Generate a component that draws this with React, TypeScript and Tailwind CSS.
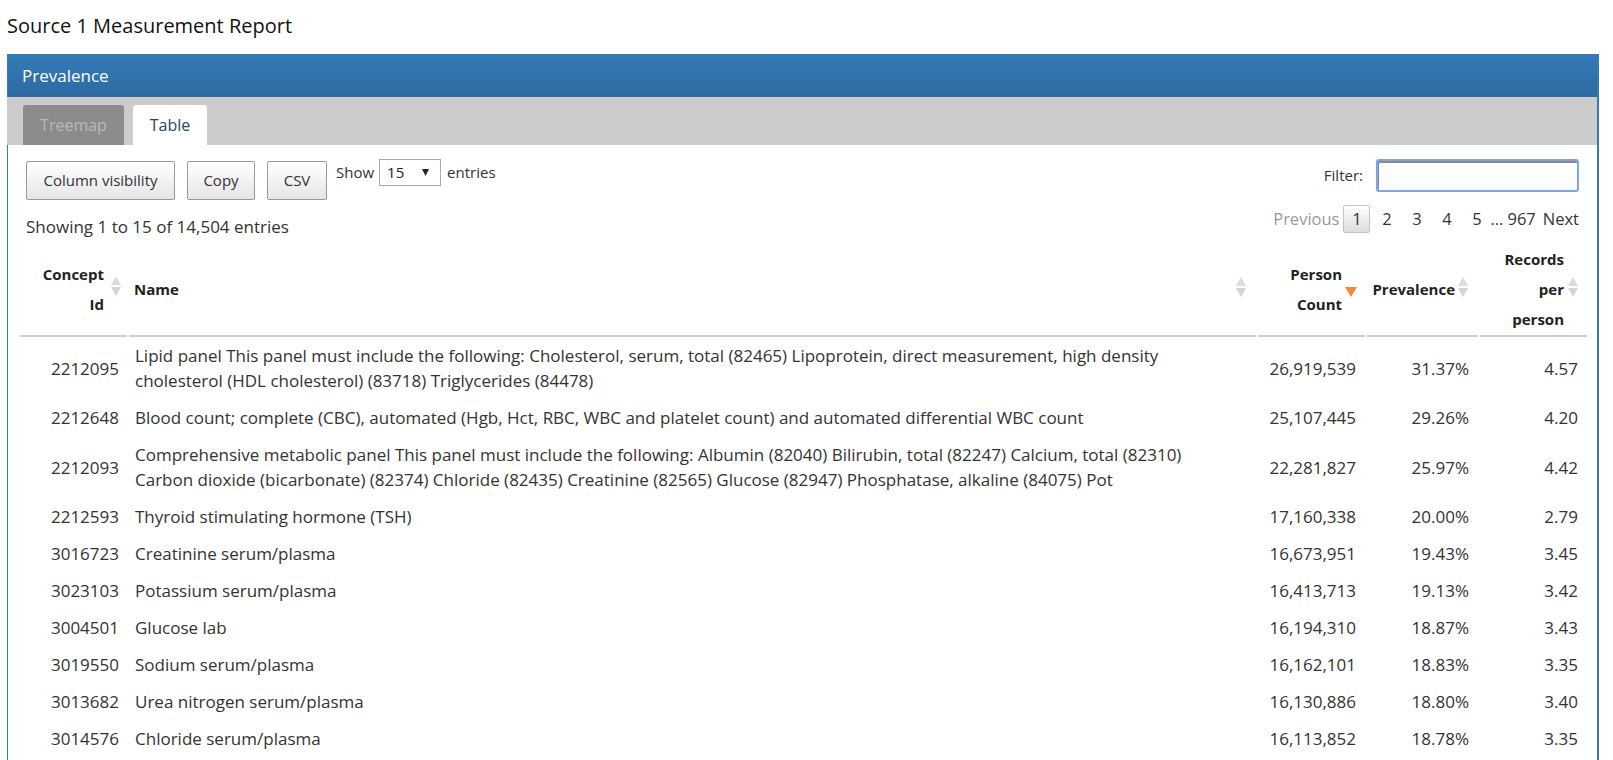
import React from 'react';

type Row = { id: string; name: string[]; count: string; prev: string; rpp: string };

const rows: Row[] = [
  {
    id: '2212095',
    name: [
      'Lipid panel This panel must include the following: Cholesterol, serum, total (82465) Lipoprotein, direct measurement, high density',
      'cholesterol (HDL cholesterol) (83718) Triglycerides (84478)',
    ],
    count: '26,919,539',
    prev: '31.37%',
    rpp: '4.57',
  },
  {
    id: '2212648',
    name: ['Blood count; complete (CBC), automated (Hgb, Hct, RBC, WBC and platelet count) and automated differential WBC count'],
    count: '25,107,445',
    prev: '29.26%',
    rpp: '4.20',
  },
  {
    id: '2212093',
    name: [
      'Comprehensive metabolic panel This panel must include the following: Albumin (82040) Bilirubin, total (82247) Calcium, total (82310)',
      'Carbon dioxide (bicarbonate) (82374) Chloride (82435) Creatinine (82565) Glucose (82947) Phosphatase, alkaline (84075) Pot',
    ],
    count: '22,281,827',
    prev: '25.97%',
    rpp: '4.42',
  },
  { id: '2212593', name: ['Thyroid stimulating hormone (TSH)'], count: '17,160,338', prev: '20.00%', rpp: '2.79' },
  { id: '3016723', name: ['Creatinine serum/plasma'], count: '16,673,951', prev: '19.43%', rpp: '3.45' },
  { id: '3023103', name: ['Potassium serum/plasma'], count: '16,413,713', prev: '19.13%', rpp: '3.42' },
  { id: '3004501', name: ['Glucose lab'], count: '16,194,310', prev: '18.87%', rpp: '3.43' },
  { id: '3019550', name: ['Sodium serum/plasma'], count: '16,162,101', prev: '18.83%', rpp: '3.35' },
  { id: '3013682', name: ['Urea nitrogen serum/plasma'], count: '16,130,886', prev: '18.80%', rpp: '3.40' },
  { id: '3014576', name: ['Chloride serum/plasma'], count: '16,113,852', prev: '18.78%', rpp: '3.35' },
];

const SortBoth = () => (
  <svg width="12" height="22" viewBox="0 0 12 22">
    <polygon points="6,1 11,10 1,10" fill="#dcdcdc" />
    <polygon points="1,12 11,12 6,21" fill="#d4d4d4" />
  </svg>
);

const SortDesc = () => (
  <svg width="12" height="10" viewBox="0 0 12 10">
    <polygon points="0,0 12,0 6,10" fill="#f28a3a" />
  </svg>
);

const App = () => {
  return (
    <div className="h-[760px] overflow-hidden bg-white font-['Open_Sans',sans-serif] text-[#333]">
      <h4 className="ml-[7px] pt-[12px] text-[20px] leading-[27px] font-normal text-[#111]">Source 1 Measurement Report</h4>

      <div className="mt-[15px] ml-[7px] mr-[14px] border-t border-l border-r-2 border-[#337ab7]">
        <div className="h-[42px] flex items-center pl-[14px] text-[17px] text-white bg-linear-to-b from-[#347bb9] to-[#2c6aa2]">
          Prevalence
        </div>

        <div className="-ml-px h-[48px] bg-[#cccccc] flex items-end pl-[16px] gap-[9px] text-[16px]">
          <div className="w-[101px] h-[40px] rounded-t-[3px] bg-[#8c8c8c] text-[#b9b9b9] flex items-center justify-center">Treemap</div>
          <div className="w-[74px] h-[40px] rounded-t-[3px] bg-white text-[#27465f] flex items-center justify-center">Table</div>
        </div>

        <div className="pt-[14px] pl-[10px] pr-[8px] pb-[40px]">
          <div className="flex justify-between items-start pl-[8px] pr-[10px]">
            <div className="flex items-start text-[15px]">
              <button className="mt-[2px] w-[149px] h-[39px] border border-[#999] rounded-[2px] bg-linear-to-b from-white to-[#e6e6e6] text-[#333]">
                Column visibility
              </button>
              <button className="mt-[2px] ml-[12px] w-[68px] h-[39px] border border-[#999] rounded-[2px] bg-linear-to-b from-white to-[#e6e6e6] text-[#333]">
                Copy
              </button>
              <button className="mt-[2px] ml-[12px] w-[60px] h-[39px] border border-[#999] rounded-[2px] bg-linear-to-b from-white to-[#e6e6e6] text-[#333]">
                CSV
              </button>
              <div className="ml-[9px] h-[27px] flex items-center text-[15px]">
                <span>Show</span>
                <div className="ml-[5px] w-[62px] h-[27px] border border-[#a9a9a9] flex items-center justify-between pl-[7px] pr-[11px] text-[#222]">
                  <span>15</span>
                  <svg width="7" height="7" viewBox="0 0 7 7">
                    <polygon points="0,0 7,0 3.5,7" fill="#222" />
                  </svg>
                </div>
                <span className="ml-[6px]">entries</span>
              </div>
            </div>
            <div className="flex items-center text-[15px]">
              <span>Filter:</span>
              <input
                className="ml-[13px] w-[203px] h-[33px] border-2 border-[#79a6ef] rounded-[3px] shadow-[inset_1px_2px_0_#8a8a8a] outline-none"
                defaultValue=""
              />
            </div>
          </div>

          <div className="flex justify-between items-start pl-[8px] pr-[10px]">
            <div className="mt-[15px] text-[17px] leading-[24px]">Showing 1 to 15 of 14,504 entries</div>
            <div className="mt-[5px] h-[28px] flex items-center text-[16.5px]">
              <span className="text-[#999]">Previous</span>
              <span className="ml-[4px] w-[27px] h-[28px] flex items-center justify-center border border-[#c4c4c4] rounded-[2px] bg-linear-to-b from-white to-[#dcdcdc]">
                1
              </span>
              {['2', '3', '4', '5'].map(p => (
                <span key={p} className="ml-[3px] w-[27px] text-center">{p}</span>
              ))}
              <span>...</span>
              <span className="ml-[4px]">967</span>
              <span className="ml-[7px]">Next</span>
            </div>
          </div>

          <table className="mt-[5px] w-[1571px] table-fixed border-separate border-spacing-x-0.5 border-spacing-y-0">
            <colgroup>
              <col className="w-[107px]" />
              <col className="w-[1127px]" />
              <col className="w-[107px]" />
              <col className="w-[111px]" />
              <col className="w-[107px]" />
            </colgroup>
            <thead>
              <tr className="text-[15px] font-bold leading-[30px] text-[#222]">
                <th className="relative align-middle text-right pl-[6px] pr-[23px] pb-px border-b-2 border-[#cccccc]">
                  Concept<br />Id
                  <span className="absolute right-[5px] top-[31px]"><SortBoth /></span>
                </th>
                <th className="relative align-middle text-left pl-[5px] pr-[23px] pb-px border-b-2 border-[#cccccc]">
                  Name
                  <span className="absolute right-[9px] top-[32px]"><SortBoth /></span>
                </th>
                <th className="relative align-middle text-right pl-[6px] pr-[23px] pb-px border-b-2 border-[#cccccc]">
                  Person<br />Count
                  <span className="absolute right-[8px] top-[43px]"><SortDesc /></span>
                </th>
                <th className="relative align-middle text-right pl-[4px] pr-[23px] pb-px border-b-2 border-[#cccccc]">
                  Prevalence
                  <span className="absolute right-[9px] top-[32px]"><SortBoth /></span>
                </th>
                <th className="relative align-middle text-right pl-[6px] pr-[23px] pb-px border-b-2 border-[#cccccc]">
                  Records<br />per<br />person
                  <span className="absolute right-[8px] top-[32px]"><SortBoth /></span>
                </th>
              </tr>
            </thead>
            <tbody className="text-[17px] leading-[25px]">
              {rows.map(r => (
                <tr key={r.id}>
                  <td className="py-[6px] pl-[6px] pr-[8px] text-right align-middle">{r.id}</td>
                  <td className="py-[6px] pl-[6px] pr-[9px] text-left align-middle whitespace-nowrap">
                    {r.name.map((line, i) => (
                      <div key={i}>{line}</div>
                    ))}
                  </td>
                  <td className="py-[6px] pl-[6px] pr-[9px] text-right align-middle">{r.count}</td>
                  <td className="py-[6px] pl-[6px] pr-[9px] text-right align-middle">{r.prev}</td>
                  <td className="py-[6px] pl-[6px] pr-[9px] text-right align-middle">{r.rpp}</td>
                </tr>
              ))}
            </tbody>
          </table>
        </div>
      </div>
    </div>
  );
};

export default App;
